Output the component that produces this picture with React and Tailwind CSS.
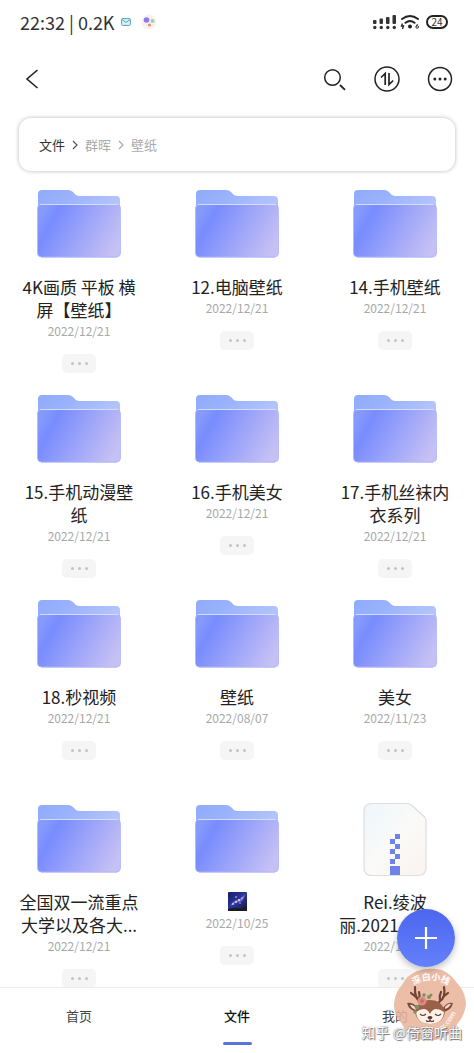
import React from "react";

const files = [
  { name: "4K画质 平板 横屏【壁纸】", date: "2022/12/21" },
  { name: "12.电脑壁纸", date: "2022/12/21" },
  { name: "14.手机壁纸", date: "2022/12/21" },
  { name: "15.手机动漫壁纸", date: "2022/12/21" },
  { name: "16.手机美女", date: "2022/12/21" },
  { name: "17.手机丝袜内衣系列", date: "2022/12/21" },
  { name: "18.秒视频", date: "2022/12/21" },
  { name: "壁纸", date: "2022/08/07" },
  { name: "美女", date: "2022/11/23" },
  { name: "全国双一流重点大学以及各大...", date: "2022/12/21" },
  { name: "", emoji: true, date: "2022/10/25" },
  { name: "Rei.绫波\n丽.2021.12.2...", date: "2022/12/21", kind: "zip" },
];

function GradientDefs() {
  return (
    <svg width="0" height="0" className="absolute" aria-hidden="true">
      <defs>
        <linearGradient id="front" x1="0" y1="0.3" x2="1" y2="0.65">
          <stop offset="0" stopColor="#859bfb" />
          <stop offset="0.16" stopColor="#788cfe" />
          <stop offset="0.55" stopColor="#9da5f9" />
          <stop offset="1" stopColor="#c6c0f4" />
        </linearGradient>
        <linearGradient id="back" x1="0" y1="0" x2="1" y2="0.3">
          <stop offset="0" stopColor="#8fabfb" />
          <stop offset="0.4" stopColor="#9ab2fc" />
          <stop offset="1" stopColor="#b3c4fd" />
        </linearGradient>
        <linearGradient id="sheet" x1="0" y1="0" x2="1" y2="1">
          <stop offset="0" stopColor="#eef6fb" />
          <stop offset="0.5" stopColor="#fafaf8" />
          <stop offset="1" stopColor="#fbf3ee" />
        </linearGradient>
        <linearGradient id="night" x1="0" y1="0" x2="1" y2="1">
          <stop offset="0" stopColor="#171d68" />
          <stop offset="0.5" stopColor="#2c359c" />
          <stop offset="1" stopColor="#101334" />
        </linearGradient>
      </defs>
    </svg>
  );
}

function Folder() {
  return (
    <svg width="86" height="72" viewBox="0 0 86 72" aria-hidden="true">
      <path d="M2 30V6q0-4 4-4h26q3 0 5 2l3 3q1.500 1 4 1h36q4 0 4 4v18z" fill="url(#back)" />
      <rect x="1.500" y="16.500" width="83" height="52.500" rx="4" fill="url(#front)" stroke="#aab8fb" strokeWidth="0.8" />
      <path d="M4 16.500h78" stroke="#d3ddff" strokeWidth="1" />
      <path d="M5 69.500h76" stroke="#c5c9fb" strokeWidth="1" />
    </svg>
  );
}

function ZipFile() {
  return (
    <svg width="66" height="76" viewBox="0 0 66 76" aria-hidden="true">
      <path d="M10 2.500h35q3 0 5 2l12 11q2 2 2 5v46q0 8-8 8H10q-8 0-8-8v-56q0-8 8-8z" fill="url(#sheet)" stroke="#dedddf" strokeWidth="1.200" />
      <g fill="#6d83ea">
        <rect x="33" y="33" width="5" height="5" />
        <rect x="28" y="38" width="5" height="5" />
        <rect x="33" y="43" width="5" height="5" />
        <rect x="28" y="48" width="5" height="5" />
        <rect x="33" y="53" width="5" height="5" />
        <rect x="28" y="58" width="5" height="5" />
        <rect x="28" y="65" width="10" height="9" />
      </g>
    </svg>
  );
}

function GalaxyEmoji() {
  return (
    <svg width="19" height="19" viewBox="0 0 19 19" role="img" aria-label="银河">
      <rect width="19" height="19" rx="1" fill="url(#night)" />
      <path d="M2 14q3-5 7-6t8-6q-1 7-6 8t-9 4z" fill="#8f86dc" opacity="0.75" />
      <g fill="#e6d9fa">
        <circle cx="5" cy="12" r="0.9" /><circle cx="8" cy="10" r="0.9" /><circle cx="11" cy="8" r="1" />
        <circle cx="8" cy="5" r="0.8" /><circle cx="14" cy="6" r="0.7" /><circle cx="12" cy="11" r="0.7" />
      </g>
      <path d="M0 17q6-2 10-1t9-2v5H0z" fill="#1b1b26" />
    </svg>
  );
}

function StatusBar() {
  return (
    <div className="flex h-11 items-center justify-between pl-5 pr-[26px] text-[#333]">
      <div className="flex items-center">
        <span className="text-[18px] leading-6">22:32 | 0.2K</span>
        <svg className="ml-[6px]" width="10" height="8" viewBox="0 0 10 8" aria-hidden="true">
          <rect x="0.600" y="0.600" width="8.800" height="6.800" rx="0.800" fill="#d8f1f7" stroke="#5ba4b8" />
          <path d="M1 1.500l4 3 4-3" fill="none" stroke="#5ba4b8" />
        </svg>
        <svg className="ml-[10px]" width="16" height="16" viewBox="0 0 16 16" aria-hidden="true">
          <circle cx="8" cy="8" r="7.500" fill="#fdf1ef" />
          <circle cx="5.500" cy="6" r="2.800" fill="#8c7af0" />
          <circle cx="11.500" cy="7" r="2" fill="#8fdc9c" />
          <circle cx="8.500" cy="11" r="1.600" fill="#ee8a78" />
        </svg>
      </div>
      <div className="flex items-center">
        <svg width="24" height="16" viewBox="0 0 24 16" fill="#333" aria-hidden="true">
          <rect x="0" y="6" width="3.500" height="4" rx="1" /><rect x="6.500" y="4.500" width="3.500" height="5.500" rx="1" />
          <rect x="13" y="3" width="3.500" height="7" rx="1" /><rect x="19.500" y="1" width="3.500" height="9" rx="1" />
          <circle cx="1.800" cy="13.500" r="1.700" /><circle cx="8.300" cy="13.500" r="1.700" />
          <circle cx="14.800" cy="13.500" r="1.700" /><circle cx="21.300" cy="13.500" r="1.700" />
        </svg>
        <svg className="ml-[3px]" width="20" height="16" viewBox="0 0 20 16" fill="none" aria-hidden="true">
          <path d="M2 5q8-6 16 0M5.500 8.800q4.500-3.500 9 0" stroke="#222" strokeWidth="2" strokeLinecap="round" />
          <circle cx="10" cy="12.500" r="2" fill="#222" />
          <path d="M2.500 9.500L1.500 12h2l-1 3" stroke="#222" strokeWidth="1.300" />
          <path d="M17.500 10l-1.300 2.500" stroke="#333" />
          <circle cx="17.200" cy="13" r="1.300" stroke="#333" />
        </svg>
        <span className="ml-[6px] flex h-[14px] w-[22px] items-center justify-center rounded-full border-2 border-[#222] text-[10px] leading-none">24</span>
      </div>
    </div>
  );
}

function Toolbar() {
  return (
    <header className="flex h-[70px] items-center justify-between pl-[22px] pr-[21px]">
      <button aria-label="返回" className="flex size-5 items-center justify-center">
        <svg width="14" height="20" viewBox="0 0 14 20" fill="none" stroke="#222" strokeWidth="1.600">
          <path d="M12.500 1L2 10l10.500 9" />
        </svg>
      </button>
      <div className="flex items-center gap-[27px]">
        <button aria-label="搜索" className="size-[26px]">
          <svg width="26" height="26" viewBox="0 0 26 26" fill="none" stroke="#222" strokeWidth="1.500">
            <circle cx="11.500" cy="11.500" r="7.800" /><path d="M19 19l5 4.800" strokeWidth="1.800" />
          </svg>
        </button>
        <button aria-label="排序" className="size-[26px]">
          <svg width="26" height="26" viewBox="0 0 26 26" fill="none" stroke="#222" strokeWidth="1.500">
            <circle cx="13" cy="13" r="12" />
            <path d="M7 11.500L11.200 7.500V19M15 7v11.500L19.200 14.500" strokeWidth="1.700" />
          </svg>
        </button>
        <button aria-label="更多" className="size-[26px]">
          <svg width="26" height="26" viewBox="0 0 26 26" fill="none" stroke="#222" strokeWidth="1.500">
            <circle cx="13" cy="13" r="11.500" />
            <g fill="#222" stroke="none"><circle cx="7.800" cy="13" r="1.500" /><circle cx="13" cy="13" r="1.500" /><circle cx="18.200" cy="13" r="1.500" /></g>
          </svg>
        </button>
      </div>
    </header>
  );
}

function Chevron({ dark }) {
  return (
    <svg width="6" height="10" viewBox="0 0 6 10" fill="none" stroke={dark ? "#555" : "#aaa"} strokeWidth="1.200" aria-hidden="true">
      <path d="M1 1l4 4-4 4" />
    </svg>
  );
}

function Breadcrumb() {
  return (
    <nav aria-label="路径" className="mx-[19px] mt-1 flex h-[53px] shrink-0 items-center gap-[7px] rounded-xl bg-white pl-5 text-[13px] text-[#aaa] shadow-[0_0_4px_rgba(0,0,0,0.28)]">
      <a href="#files" className="text-[#333]">文件</a>
      <Chevron dark />
      <a href="#nas">群晖</a>
      <Chevron />
      <a href="#wallpaper">壁纸</a>
    </nav>
  );
}

function FileCard({ file }) {
  return (
    <li className="flex flex-col items-center">
      <div className="flex h-[76px] items-center justify-center">{file.kind === "zip" ? <ZipFile /> : <Folder />}</div>
      <div className="mt-[13px] w-[122px] whitespace-pre-line text-center text-[17px] leading-[23px] text-[#222]">
        {file.emoji ? <span className="flex h-[23px] items-center justify-center"><GalaxyEmoji /></span> : file.name}
      </div>
      <time className="text-[12px] leading-5 text-[#a8a8a8]">{file.date}</time>
      <button aria-label="更多操作" className="mt-[13px] flex h-[19px] w-[34px] items-center justify-center gap-1 rounded-[5px] bg-[#f5f5f5]">
        <span className="size-[3px] rounded-full bg-[#c4c4c4]" />
        <span className="size-[3px] rounded-full bg-[#c4c4c4]" />
        <span className="size-[3px] rounded-full bg-[#c4c4c4]" />
      </button>
    </li>
  );
}

function DeerBadge() {
  return (
    <svg width="74" height="74" viewBox="0 0 74 74" aria-hidden="true">
      <defs>
        <path id="badge-top" d="M11 36A27 24 0 0 1 65 36" />
        <path id="badge-bottom" d="M16 61Q50 78 65 40" />
      </defs>
      <path d="M24 3Q36-1 49 2q9 4 15 13 8 8 9 20-1 12-8 20-5 11-16 15-12 5-24 1Q13 67 9 56 1 48 1 36 2 24 9 17 14 7 24 3z" fill="#e9b49b" fillOpacity="0.88" />
      <text fontSize="9" fontWeight="700" fill="#fff" textAnchor="middle"><textPath href="#badge-top" startOffset="50%">深白小栈</textPath></text>
      <text fontSize="7" fontWeight="700" fill="#fff" fillOpacity="0.8" textAnchor="middle"><textPath href="#badge-bottom" startOffset="50%">www.deer.com</textPath></text>
      <g fill="none" stroke="#6e4438" strokeWidth="2.200" strokeLinecap="round">
        <path d="M29 35Q21 31 22 19M23 29l-5-4M26 32q1-4 0-8M46 34q7-4 5-15M50 29l5-4M47 32q-1-4 1-8" />
      </g>
      <path d="M25 40q-5-6-11-5 2 8 11 9zM50 40q4-6 10-5-2 8-10 9z" fill="#7b4b3c" />
      <path d="M23 40q-4-4-6-3 2 4 6 5zM52 39q4-4 6-3-2 4-6 5z" fill="#f5d8ca" />
      <path d="M37 32q12 0 15 12-2 12-15 12T22 44q3-12 15-12z" fill="#9a6148" />
      <path d="M23 44q10-7 14 2 4-9 14-2-1 12-14 12T23 44z" fill="#fff1e8" />
      <path d="M27 46q3 3 6 0M42 46q3 3 6 0M37 50v2.500q-2 2-4 0m4 0q2 2 4 0" fill="none" stroke="#623c35" strokeWidth="1.100" />
      <ellipse cx="37" cy="49.500" rx="2.500" ry="1.500" fill="#55342f" />
      <circle cx="29" cy="33" r="4.500" fill="#d98d84" /><circle cx="29" cy="33" r="2" fill="#c76f6c" />
      <g fill="#7d9161">
        <circle cx="24" cy="39" r="2.300" /><circle cx="36" cy="29" r="2" /><circle cx="31" cy="27" r="1.800" /><circle cx="22" cy="44" r="1.800" /><circle cx="38" cy="27" r="1.500" />
      </g>
    </svg>
  );
}

export default function App() {
  return (
    <div className="relative flex h-screen flex-col overflow-hidden bg-white font-['Noto_Sans_CJK_SC',sans-serif]">
      <GradientDefs />
      <StatusBar />
      <Toolbar />
      <Breadcrumb />
      <main className="min-h-0 flex-1 overflow-y-auto pt-[15px] [scrollbar-width:none]">
        <ul className="grid auto-rows-[205px] grid-cols-3">
          {files.map((file, i) => <FileCard key={i} file={file} />)}
        </ul>
      </main>
      <nav aria-label="主导航" className="grid h-[66px] shrink-0 grid-cols-3 border-t border-[#ececec] bg-white text-[13px] text-[#444]">
        <a href="#home" className="flex flex-col items-center pt-[18px] leading-5">首页</a>
        <a href="#files" aria-current="page" className="flex flex-col items-center pt-[18px] font-medium leading-5 text-[#111]">
          文件
          <span className="mt-4 h-[3px] w-[29px] rounded-full bg-[#5b74dc]" />
        </a>
        <a href="#me" className="flex flex-col items-center pt-[18px] leading-5">我的</a>
      </nav>
      <div className="absolute bottom-[11px] right-[7px]"><DeerBadge /></div>
      <button aria-label="添加" className="absolute bottom-[86px] right-[19px] flex size-[58px] items-center justify-center rounded-full bg-linear-to-b from-[#4d66ee] to-[#6480fb] shadow-[0_3px_7px_rgba(0,0,0,0.25)]">
        <svg width="24" height="24" viewBox="0 0 24 24" stroke="#fff" strokeWidth="2.200"><path d="M12 1v22M1 12h22" /></svg>
      </button>
      <span className="absolute bottom-[11px] right-3 text-[14px] leading-5 text-white [text-shadow:0_0_1px_#555,1px_1px_1px_#777]">知乎 @倚窗听曲</span>
    </div>
  );
}
